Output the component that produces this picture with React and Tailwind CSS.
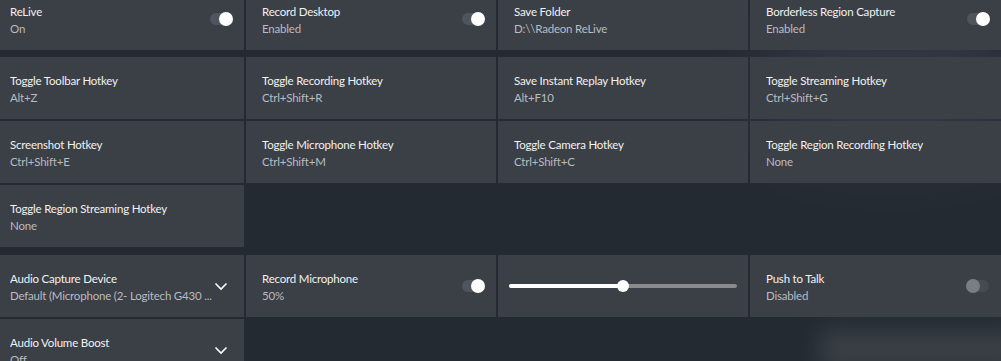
const rows = [
  [
    { title: "ReLive", value: "On", control: "on" },
    { title: "Record Desktop", value: "Enabled", control: "on" },
    { title: "Save Folder", value: "D:\\\\Radeon ReLive" },
    { title: "Borderless Region Capture", value: "Enabled", control: "on" },
  ],
  [
    { title: "Toggle Toolbar Hotkey", value: "Alt+Z" },
    { title: "Toggle Recording Hotkey", value: "Ctrl+Shift+R" },
    { title: "Save Instant Replay Hotkey", value: "Alt+F10" },
    { title: "Toggle Streaming Hotkey", value: "Ctrl+Shift+G" },
  ],
  [
    { title: "Screenshot Hotkey", value: "Ctrl+Shift+E" },
    { title: "Toggle Microphone Hotkey", value: "Ctrl+Shift+M" },
    { title: "Toggle Camera Hotkey", value: "Ctrl+Shift+C" },
    { title: "Toggle Region Recording Hotkey", value: "None" },
  ],
  [{ title: "Toggle Region Streaming Hotkey", value: "None" }],
];

const audioRows = [
  [
    { title: "Audio Capture Device", value: "Default (Microphone (2- Logitech G430 ...", control: "chevron" },
    { title: "Record Microphone", value: "50%", control: "on" },
    { control: "slider", value: 50 },
    { title: "Push to Talk", value: "Disabled", control: "off" },
  ],
  [{ title: "Audio Volume Boost", value: "Off", control: "chevron" }],
];

function Toggle({ on }) {
  return (
    <div className="relative w-[22px] h-[12px] shrink-0">
      <div className={`absolute inset-0 rounded-full ${on ? "bg-[#50555d]" : "bg-[#464a52]"}`} />
      <div
        className={`absolute top-[-1px] w-[14px] h-[14px] rounded-full ${
          on ? "right-[-1px] bg-white" : "left-[-1px] bg-[#7a7d82]"
        }`}
      />
    </div>
  );
}

function Chevron() {
  return (
    <svg width="14" height="9" viewBox="0 0 14 9" className="shrink-0">
      <path d="M1.5 1.5 L7 7 L12.5 1.5" fill="none" stroke="white" strokeWidth="1.6" />
    </svg>
  );
}

function Slider({ value }) {
  return (
    <div className="relative w-full h-[10px] flex items-center">
      <div className="w-full h-[4px] bg-[#8a8b8d] rounded-full" />
      <div
        className="absolute left-0 h-[4px] bg-white rounded-full"
        style={{ width: `${value}%` }}
      />
      <div
        className="absolute w-[12px] h-[12px] rounded-full bg-white -translate-x-1/2"
        style={{ left: `${value}%` }}
      />
    </div>
  );
}

function Cell({ item, last }) {
  if (item.control === "slider") {
    return (
      <div className="w-[250px] h-[62px] bg-[#3b3f46] flex items-center pl-[11px] pr-[11px] shrink-0">
        <Slider value={item.value} />
      </div>
    );
  }
  return (
    <div
      className={`${last ? "flex-1" : "w-[250px]"} h-[62px] bg-[#3b3f46] flex items-center pl-[16px] pr-[12px] shrink-0`}
    >
      <div className="flex-1 min-w-0 pt-[2px] text-[11.5px] tracking-[-0.2px] leading-[17px]">
        <div className="text-[#f2f2f2] whitespace-nowrap overflow-hidden">{item.title}</div>
        <div className="text-[#b9bcc1] whitespace-nowrap overflow-hidden">{item.value}</div>
      </div>
      {item.control === "on" && <Toggle on />}
      {item.control === "off" && <Toggle on={false} />}
      {item.control === "chevron" && (
        <div className="pr-[4px] pl-[2px]">
          <Chevron />
        </div>
      )}
    </div>
  );
}

function Group({ data }) {
  return (
    <div className="flex flex-col gap-[2px]">
      {data.map((row, i) => (
        <div key={i} className="flex gap-[2px]">
          {row.map((item, j) => (
            <Cell key={j} item={item} last={j === 3} />
          ))}
        </div>
      ))}
    </div>
  );
}

export default function App() {
  return (
    <div
      className="w-[1001px] h-[361px] overflow-hidden bg-[#242a31] relative"
      style={{ fontFamily: 'Lato, "Noto Sans", sans-serif' }}
    >
      <div className="absolute left-[760px] top-[20px] w-[260px] h-[130px] rounded-full bg-[#4a4f6a] opacity-40 blur-2xl" />
      <div className="absolute left-[820px] top-[330px] w-[200px] h-[40px] bg-[#4a4f55] opacity-60 blur-md" />
      <div className="relative -mt-[12px] -ml-[6px] flex flex-col">
        <Group data={rows.slice(0, 1)} />
        <div className="mt-[7px]">
          <Group data={rows.slice(1)} />
        </div>
        <div className="mt-[8px]">
          <Group data={audioRows} />
        </div>
      </div>
    </div>
  );
}
